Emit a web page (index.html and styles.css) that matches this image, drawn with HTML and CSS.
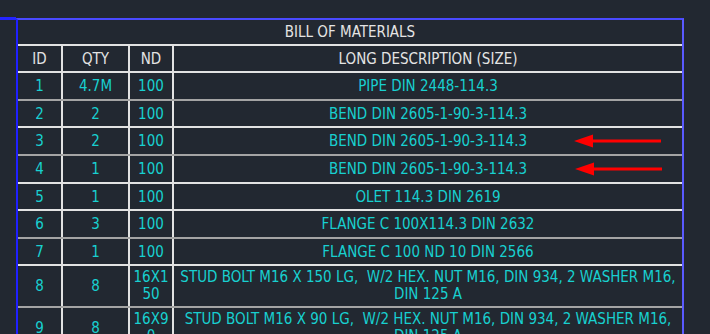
FILE: index.html
```html
<!DOCTYPE html>
<html lang="en">
<head>
<meta charset="utf-8">
<title>Bill of Materials</title>
<link rel="stylesheet" href="styles.css">
</head>
<body>
<div class="sheet">
  <div class="stub"></div>
  <div class="frame">
    <div class="row title"><div class="cell span">BILL OF MATERIALS</div></div>
    <div class="row head h25">
      <div class="cell">ID</div><div class="cell">QTY</div><div class="cell">ND</div><div class="cell">LONG DESCRIPTION (SIZE)</div>
    </div>
    <div class="row h26 gray">
      <div class="cell">1</div><div class="cell">4.7M</div><div class="cell">100</div><div class="cell">PIPE DIN 2448-114.3</div>
    </div>
    <div class="row h25">
      <div class="cell">2</div><div class="cell">2</div><div class="cell">100</div><div class="cell">BEND DIN 2605-1-90-3-114.3</div>
    </div>
    <div class="row h26 gray">
      <div class="cell">3</div><div class="cell">2</div><div class="cell">100</div><div class="cell desc">BEND DIN 2605-1-90-3-114.3<svg class="arrow" width="88" height="14" viewBox="0 0 88 14"><polygon points="0,7 19,0.5 19,13.5" fill="#ff0000"/><rect x="18" y="5.5" width="69" height="3" fill="#ff0000"/></svg></div>
    </div>
    <div class="row h26">
      <div class="cell">4</div><div class="cell">1</div><div class="cell">100</div><div class="cell desc">BEND DIN 2605-1-90-3-114.3<svg class="arrow second" width="88" height="14" viewBox="0 0 88 14"><polygon points="0,7 19,0.5 19,13.5" fill="#ff0000"/><rect x="18" y="5.5" width="69" height="3" fill="#ff0000"/></svg></div>
    </div>
    <div class="row h25">
      <div class="cell">5</div><div class="cell">1</div><div class="cell">100</div><div class="cell">OLET 114.3 DIN 2619</div>
    </div>
    <div class="row h26 gray">
      <div class="cell">6</div><div class="cell">3</div><div class="cell">100</div><div class="cell">FLANGE C 100X114.3 DIN 2632</div>
    </div>
    <div class="row h25">
      <div class="cell">7</div><div class="cell">1</div><div class="cell">100</div><div class="cell">FLANGE C 100 ND 10 DIN 2566</div>
    </div>
    <div class="row h40 gray">
      <div class="cell">8</div><div class="cell">8</div><div class="cell nd">16X150</div><div class="cell multi">STUD BOLT M16 X 150 LG,  W/2 HEX. NUT M16, DIN 934, 2 WASHER M16, DIN 125 A</div>
    </div>
    <div class="row h40">
      <div class="cell">9</div><div class="cell">8</div><div class="cell nd">16X90</div><div class="cell multi">STUD BOLT M16 X 90 LG,  W/2 HEX. NUT M16, DIN 934, 2 WASHER M16, DIN 125 A</div>
    </div>
  </div>
</div>
</body>
</html>
```

FILE: styles.css
```css
html, body {
  margin: 0;
  padding: 0;
  height: 334px;
  overflow: hidden;
  background: #222831;
}

.sheet {
  display: flex;
  align-items: flex-start;
  padding-top: 17px;
  font-family: "Liberation Sans Narrow", "DejaVu Sans Condensed", "Liberation Sans", sans-serif;
  font-size: 15px;
  color: #18d0d0;
}

.stub {
  width: 16px;
  height: 3px;
  background: #2424ff;
}

.frame {
  width: 664px;
  margin-top: 1px;
  border-top: 2px solid #4a4aff;
  border-left: 2px solid #2020ff;
  border-right: 2px solid #5a5aff;
  background: #e2e2e2;
}

.row {
  display: grid;
  grid-template-columns: 43px 65px 42px 1fr;
  column-gap: 2px;
  border-bottom: 2px solid #e2e2e2;
}

.row.gray {
  border-bottom-color: #a4a4a4;
}

.cell {
  background: #222831;
  display: flex;
  align-items: center;
  justify-content: center;
  text-align: center;
  white-space: nowrap;
}

.title {
  grid-template-columns: 1fr;
  height: 24px;
}

.title .cell,
.head .cell {
  color: #e4e4e4;
}

.h25 { height: 25px; }
.h26 { height: 26px; }
.h40 { height: 40px; }

.desc {
  position: relative;
}

.arrow {
  position: absolute;
  left: 400px;
  top: 50%;
  margin-top: -7px;
}

.arrow.second {
  left: 401px;
}

.nd {
  white-space: normal;
  word-break: break-all;
  padding: 0 3px;
  line-height: 17px;
}

.multi {
  white-space: pre-wrap;
  line-height: 17px;
  padding: 0 6px;
}
```
